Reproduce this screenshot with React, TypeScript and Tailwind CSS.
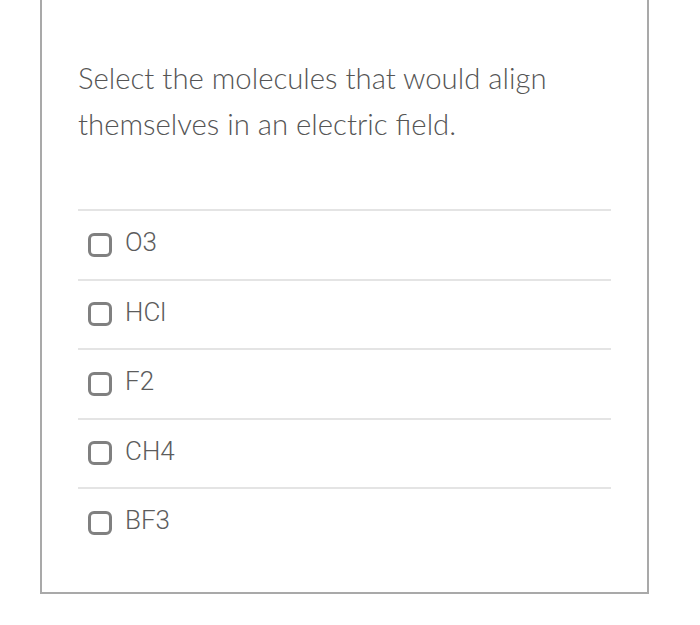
import React from 'react';

const options = ['O3', 'HCl', 'F2', 'CH4', 'BF3'];

const App: React.FC = () => {
  return (
    <div className="w-[700px] h-[625px] bg-white">
      <div className="ml-[40px] w-[609px] h-[594px] border-x-2 border-b-2 border-[#a9a9a9] px-[36px] pt-[55px]">
        <p
          className="text-[29.3px] leading-[46px] font-light text-[#555555] pr-[40px]"
          style={{ fontFamily: 'Lato, "Open Sans", sans-serif' }}
        >
          Select the molecules that would align themselves in an electric field.
        </p>
        <ul className="mt-[62px]">
          {options.map((opt) => (
            <li
              key={opt}
              className="h-[69.5px] border-t-2 border-[#e4e4e4] flex items-center pl-[10px]"
            >
              <span className="w-[24px] h-[24px] border-[3px] border-[#808080] rounded-[6px] shrink-0" />
              <span
                className="ml-[13px] text-[26px] font-light text-[#5c5c5c] -mt-[4px]"
                style={{ fontFamily: 'Roboto, "Liberation Sans", sans-serif' }}
              >
                {opt}
              </span>
            </li>
          ))}
        </ul>
      </div>
    </div>
  );
};

export default App;
